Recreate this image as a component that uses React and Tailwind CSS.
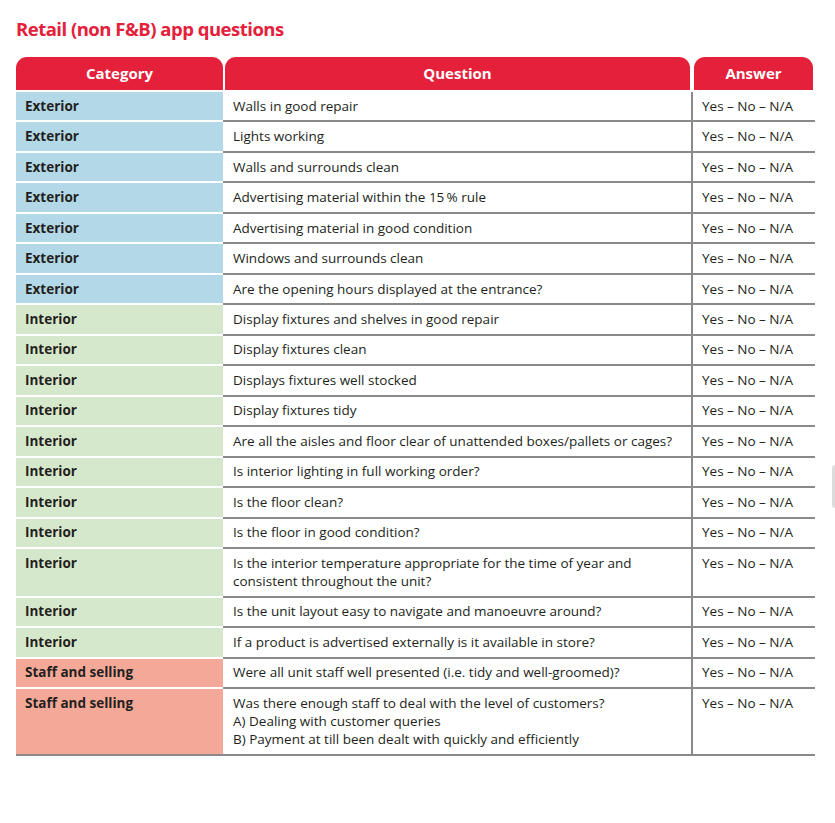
import React from "react";

const rows = [
  ["Exterior", "ext", ["Walls in good repair"]],
  ["Exterior", "ext", ["Lights working"]],
  ["Exterior", "ext", ["Walls and surrounds clean"]],
  ["Exterior", "ext", ["Advertising material within the 15\u2009% rule"]],
  ["Exterior", "ext", ["Advertising material in good condition"]],
  ["Exterior", "ext", ["Windows and surrounds clean"]],
  ["Exterior", "ext", ["Are the opening hours displayed at the entrance?"]],
  ["Interior", "int", ["Display fixtures and shelves in good repair"]],
  ["Interior", "int", ["Display fixtures clean"]],
  ["Interior", "int", ["Displays fixtures well stocked"]],
  ["Interior", "int", ["Display fixtures tidy"]],
  ["Interior", "int", ["Are all the aisles and floor clear of unattended boxes/pallets or cages?"]],
  ["Interior", "int", ["Is interior lighting in full working order?"]],
  ["Interior", "int", ["Is the floor clean?"]],
  ["Interior", "int", ["Is the floor in good condition?"]],
  ["Interior", "int", ["Is the interior temperature appropriate for the time of year and", "consistent throughout the unit?"]],
  ["Interior", "int", ["Is the unit layout easy to navigate and manoeuvre around?"]],
  ["Interior", "int", ["If a product is advertised externally is it available in store?"]],
  ["Staff and selling", "staff", ["Were all unit staff well presented (i.e. tidy and well-groomed)?"]],
  ["Staff and selling", "staff", [
    "Was there enough staff to deal with the level of customers?",
    "A) Dealing with customer queries",
    "B) Payment at till been dealt with quickly and efficiently",
  ]],
];

const bg = {
  ext: "bg-[#b3d8e7]",
  int: "bg-[#d6e8cb]",
  staff: "bg-[#f4a898]",
};

export default function App() {
  return (
    <div
      className="relative w-[835px] h-[823px] bg-white text-[#231f20]"
      style={{ fontFamily: '"Open Sans", "Noto Sans", sans-serif' }}
    >
      <div className="pl-[16px] pt-[15px]">
        <h1 className="text-[18.5px] leading-[28px] font-bold text-[#e4203a] tracking-[-0.5px]">
          Retail (non F&amp;B) app questions
        </h1>
        <div className="mt-[14px] w-[799px]">
          <div className="flex h-[33px] text-white font-bold text-[15px]">
            <div className="w-[207px] bg-[#e4203a] rounded-t-[11px] flex items-center justify-center">
              Category
            </div>
            <div className="ml-[2px] w-[465px] bg-[#e4203a] rounded-t-[11px] flex items-center justify-center">
              Question
            </div>
            <div className="ml-[4px] w-[119px] bg-[#e4203a] rounded-t-[11px] flex items-center justify-center">
              Answer
            </div>
          </div>
          <div className="mt-[2px] text-[13.5px] leading-[18px]">
            {rows.map(([cat, kind, q], i) => {
              const last = i === rows.length - 1;
              return (
                <div key={i} className="flex">
                  <div
                    className={`w-[207px] ${bg[kind]} border-b-2 ${last ? "border-[#8a8a8a]" : "border-white"} pl-[9px] pt-[4.6px] pb-[5.9px] font-bold`}
                  >
                    {cat}
                  </div>
                  <div className="w-[468px] border-b-2 border-[#8a8a8a] pl-[10px] pt-[4.6px] pb-[5.9px]">
                    {q.map((l, j) => (
                      <div key={j}>{l}</div>
                    ))}
                  </div>
                  <div className="w-[124px] border-b-2 border-l-2 border-[#8a8a8a] pl-[9px] pt-[4.6px] pb-[5.9px]">
                    Yes – No – N/A
                  </div>
                </div>
              );
            })}
          </div>
        </div>
      </div>
      <div className="absolute right-0 top-[465px] w-[3px] h-[43px] rounded-l-full bg-[#dcdcdc]" />
    </div>
  );
}
